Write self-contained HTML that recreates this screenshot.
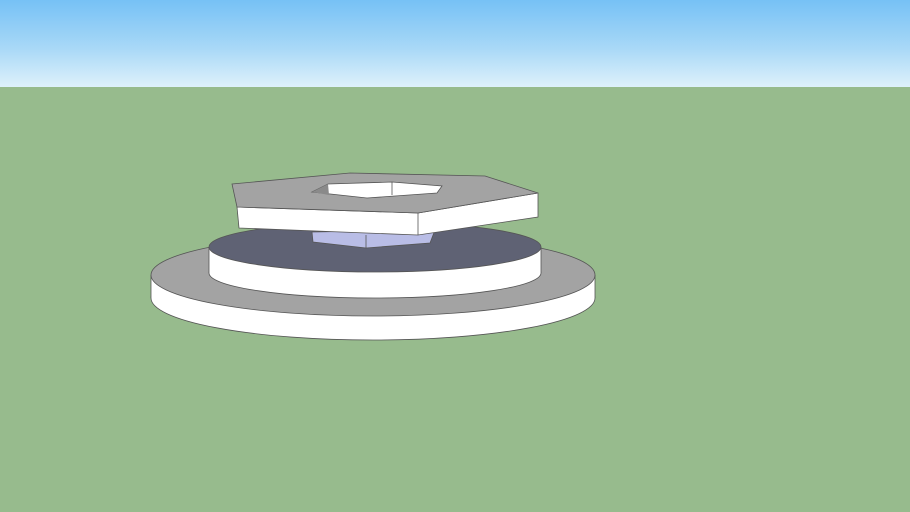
<!DOCTYPE html>
<html><head><style>
html,body{margin:0;padding:0;width:910px;height:512px;overflow:hidden}
body{background:#97bb8d}
#sky{position:absolute;left:0;top:0;width:910px;height:87px;background:linear-gradient(#76c1f5,#a8d8f7 55%,#def1fb)}
svg{position:absolute;left:0;top:0}
</style></head><body>
<div id="sky"></div>
<svg width="910" height="512" viewBox="0 0 910 512">
<g stroke="#555" stroke-width="0.8">
<!-- big disc -->
<ellipse cx="373" cy="298" rx="222" ry="42" fill="#fff"/>
<rect x="151" y="275" width="444" height="23" fill="#fff" stroke="none"/>
<line x1="151" y1="275" x2="151" y2="298"/><line x1="595" y1="275" x2="595" y2="298"/>
<ellipse cx="373" cy="275" rx="222" ry="41" fill="#a3a3a3"/>
<!-- middle disc -->
<ellipse cx="375" cy="273" rx="166" ry="25" fill="#fff"/>
<rect x="209" y="247" width="332" height="26" fill="#fff" stroke="none"/>
<line x1="209" y1="247" x2="209" y2="273"/><line x1="541" y1="247" x2="541" y2="273"/>
<ellipse cx="375" cy="247" rx="166" ry="25" fill="#5f6274"/>
<!-- small lilac nut -->
<polygon points="312,232 435,230 430,243 366,248 313,242" fill="#b9bde6"/>
<line x1="366" y1="235" x2="366" y2="248"/>
<!-- top hex nut sides -->
<polygon points="237,207 418,213 538,193 538,217 418,235 239,228" fill="#fff"/>
<line x1="418" y1="213" x2="418" y2="235"/>
<!-- top face -->
<polygon points="232,184 350,173 485,176 538,193 418,213 237,207" fill="#a3a3a3"/>
<!-- hole -->
<polygon points="312,192 328,184 392,182 442,186 437,193 367,198" fill="#fff"/>
<polygon points="312,192 328,184 329,195" fill="#8a8a8a" stroke="none"/>
<line x1="392" y1="182" x2="392" y2="195"/>
</g>
</svg>
</body></html>
